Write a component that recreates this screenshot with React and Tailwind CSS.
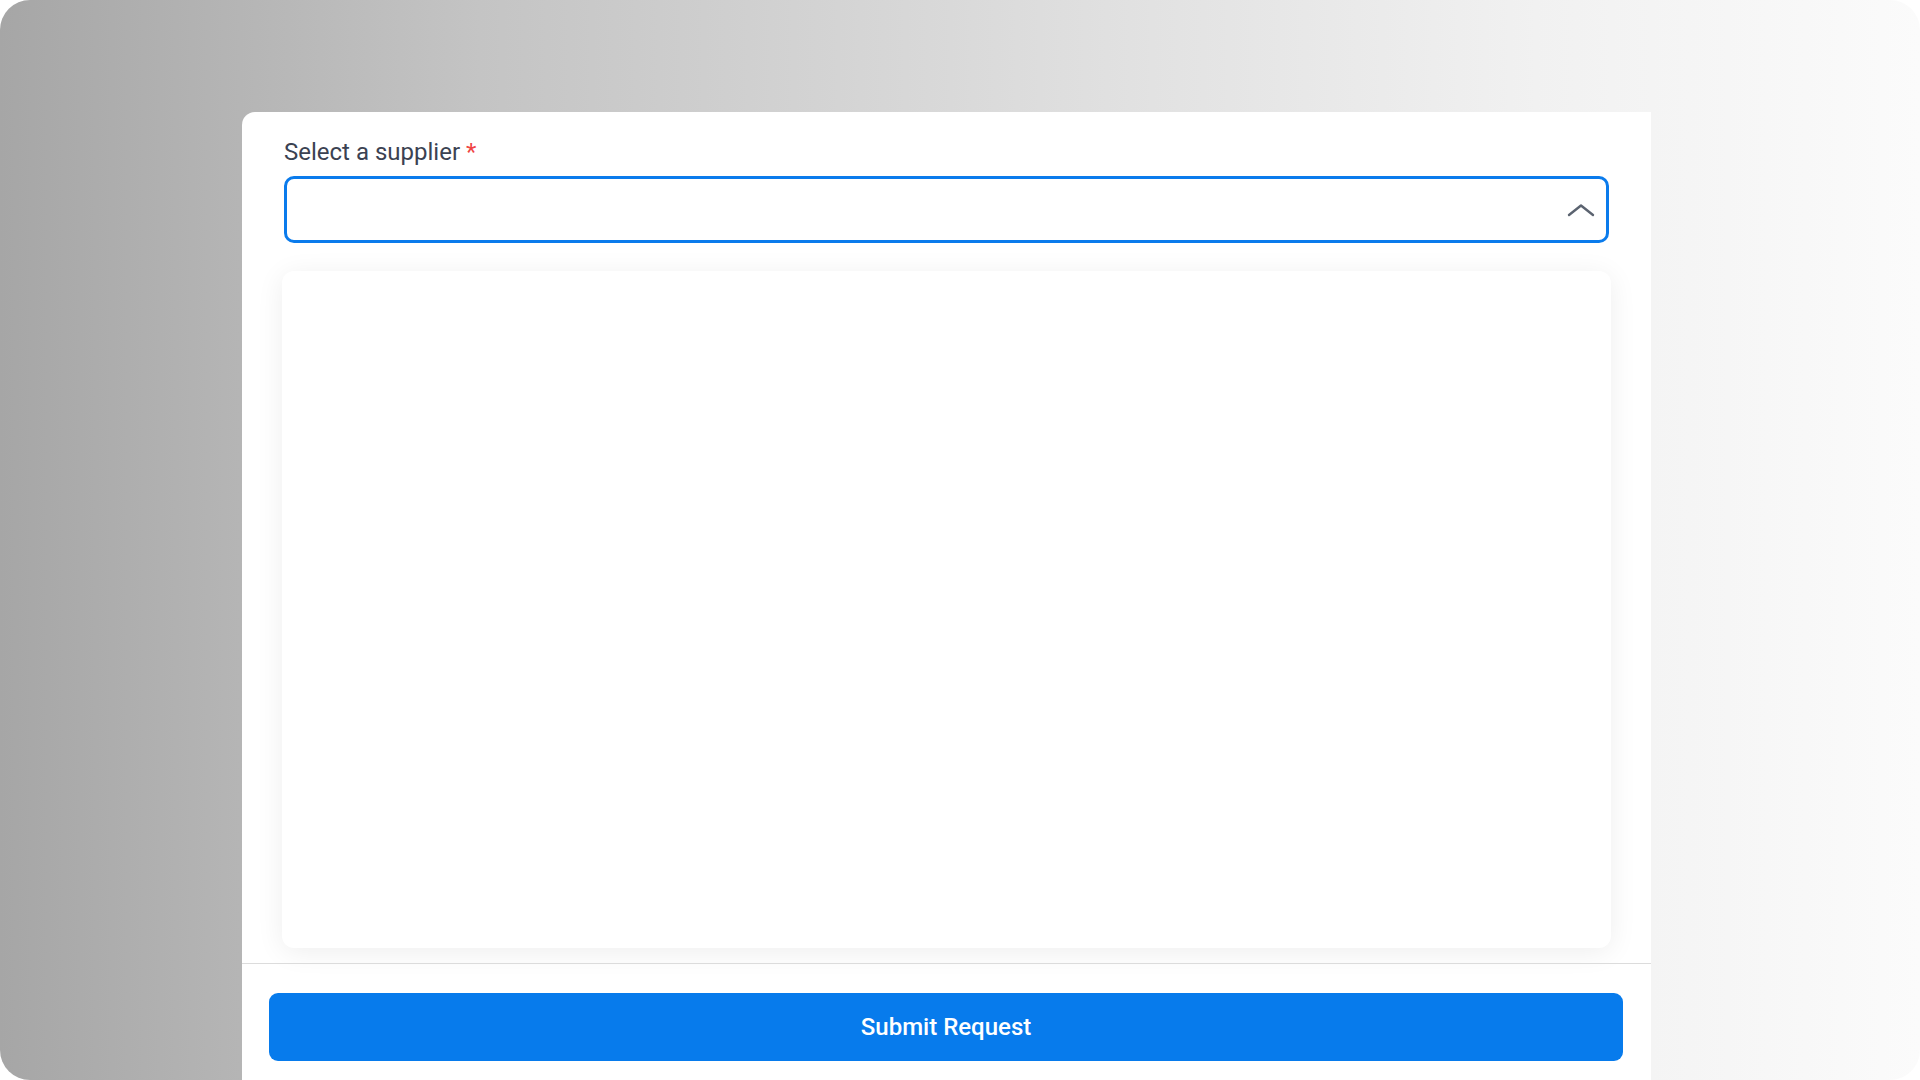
export default function App() {
  return (
    <div className="w-screen h-screen bg-white overflow-hidden" style={{ fontFamily: 'Roboto, "Liberation Sans", sans-serif' }}>
      <div className="w-full h-full rounded-[30px] bg-[linear-gradient(90deg,#a6a6a6_0%,#c4c4c4_25%,#e2e2e2_60%,#f1f1f1_80%,#fbfbfb_100%)] flex pl-[242px] pt-[112px]">
        <div className="w-[1409px] h-full bg-white rounded-tl-[13px] flex flex-col">
          <div className="px-[42px] pt-[25px] pb-[15px] flex flex-col">
            <label className="text-[24px] leading-[30px] text-[#3b4252]">
              Select a supplier <span className="text-[#ef4444]">*</span>
            </label>
            <div className="mt-[9px] h-[67px] rounded-[10px] border-[3px] border-[#0a7bec] flex items-center justify-end pr-[11px]">
              <svg width="28" height="14" viewBox="0 0 28 14" fill="none">
                <path d="M2 12 L14 2.5 L26 12" stroke="#5b6370" strokeWidth="2.4" strokeLinecap="round" strokeLinejoin="round" />
              </svg>
            </div>
            <div className="mt-[28px] -ml-[2px] w-[1329px] h-[677px] bg-white rounded-[12px] shadow-[0_4px_28px_rgba(0,0,0,0.07)]" />
          </div>
          <div className="border-t border-[#dcdcdc] pt-[29px] pl-[27px] pr-[28px]">
            <button className="w-full h-[68px] rounded-[9px] bg-[#077bec] text-white text-[24px] font-medium">
              Submit Request
            </button>
          </div>
        </div>
      </div>
    </div>
  )
}
